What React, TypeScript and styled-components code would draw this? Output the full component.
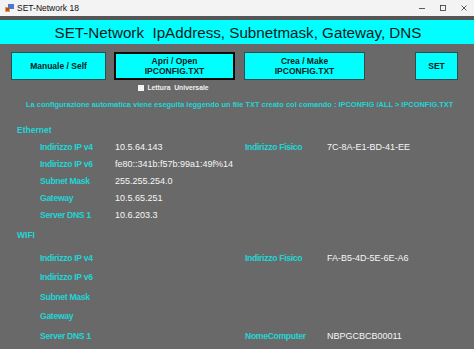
import React from 'react';
import styled, {createGlobalStyle} from 'styled-components';

const Global = createGlobalStyle`
  html, body {
    margin: 0;
    padding: 0;
    background: #696969;
  }
  * { box-sizing: border-box; }
`;

const Window = styled.div`
  width: 474px;
  height: 349px;
  background: #696969;
  display: flex;
  flex-direction: column;
  overflow: hidden;
  font-family: "Liberation Sans", Arial, sans-serif;
`;

const TitleBar = styled.div`
  height: 16px;
  background: #f3f3f3;
  display: flex;
  align-items: center;
  padding-left: 5px;
  font-size: 8.5px;
  color: #111;
`;

const AppTitle = styled.span`
  margin-left: 3px;
  flex: 1;
`;

const Controls = styled.div`
  display: flex;
  align-items: center;
  height: 100%;
`;

const Ctrl = styled.div`
  width: 21px;
  height: 100%;
  display: flex;
  align-items: center;
  justify-content: center;
`;

const Strip = styled.div`
  height: 4px;
  background: #555555;
`;

const Banner = styled.div`
  height: 24px;
  background: #00ffff;
  display: flex;
  align-items: center;
  justify-content: center;
  font-size: 15.2px;
  color: #0a1a1a;
  white-space: pre;
  padding-left: 2px;
`;

const ButtonRow = styled.div`
  display: flex;
  align-items: flex-start;
  padding: 8px 0 0 11px;
  height: 60px;
`;

const Btn = styled.div<{$w: number; $ml: number; $focus?: boolean}>`
  width: ${p => p.$w}px;
  height: 28px;
  margin-left: ${p => p.$ml}px;
  background: #00ffff;
  border: ${p => (p.$focus ? '2px solid #0b0b0b' : '1px solid #2f4f4f')};
  display: flex;
  align-items: center;
  justify-content: center;
  text-align: center;
  font-weight: bold;
  font-size: 8.5px;
  line-height: 10px;
  color: #102020;
`;

const OpenCol = styled.div`
  display: flex;
  flex-direction: column;
  align-items: center;
`;

const Check = styled.label`
  display: flex;
  align-items: center;
  margin-top: 4px;
  margin-left: 6px;
  font-size: 6.8px;
  font-weight: bold;
  color: #f0f0f0;
  white-space: pre;
`;

const Box = styled.span`
  width: 6px;
  height: 6px;
  background: #f4f4f4;
  margin-right: 3px;
`;

const Info = styled.div`
  padding-left: 26px;
  margin-top: -4px;
  font-size: 7.45px;
  font-weight: bold;
  color: #1fd6d6;
  white-space: nowrap;
`;

const Section = styled.div<{$mt: number}>`
  margin-top: ${p => p.$mt}px;
`;

const SectionTitle = styled.div`
  padding-left: 17px;
  font-size: 8.5px;
  font-weight: bold;
  color: #1fd6d6;
  height: 12px;
  line-height: 12px;
`;

const Grid = styled.div<{$row: number; $mt: number}>`
  display: grid;
  grid-template-columns: 75px 130px 82px 1fr;
  grid-auto-rows: ${p => p.$row}px;
  align-items: center;
  padding-left: 40px;
  margin-top: ${p => p.$mt}px;
`;

const Label = styled.div`
  font-size: 8.6px;
  font-weight: bold;
  letter-spacing: -0.3px;
  color: #1fd6d6;
  white-space: nowrap;
`;

const Value = styled.div`
  font-size: 9px;
  color: #f6f6f6;
  white-space: nowrap;
`;

type Row = [string, string, string?, string?];

const ethernet: Row[] = [
  ['Indirizzo IP v4', '10.5.64.143', 'Indirizzo Fisico', '7C-8A-E1-BD-41-EE'],
  ['Indirizzo IP v6', 'fe80::341b:f57b:99a1:49f%14'],
  ['Subnet Mask', '255.255.254.0'],
  ['Gateway', '10.5.65.251'],
  ['Server DNS 1', '10.6.203.3'],
];

const wifi: Row[] = [
  ['Indirizzo IP v4', '', 'Indirizzo Fisico', 'FA-B5-4D-5E-6E-A6'],
  ['Indirizzo IP v6', ''],
  ['Subnet Mask', ''],
  ['Gateway', ''],
  ['Server DNS 1', '', 'NomeComputer', 'NBPGCBCB00011'],
];

const Rows = ({rows}: {rows: Row[]}) => (
  <>
    {rows.map((r, i) => (
      <React.Fragment key={i}>
        <Label>{r[0]}</Label>
        <Value>{r[1]}</Value>
        <Label>{r[2] || ''}</Label>
        <Value>{r[3] || ''}</Value>
      </React.Fragment>
    ))}
  </>
);

const AppIcon = () => (
  <svg width="9" height="9" viewBox="0 0 9 9">
    <rect x="0" y="3" width="5" height="5" fill="#d9a441"/>
    <rect x="3" y="0" width="6" height="5" fill="#4f77c9"/>
    <rect x="1" y="4" width="3" height="3" fill="#c2452f"/>
  </svg>
);

export default function App() {
  return (
    <Window>
      <Global/>
      <TitleBar>
        <AppIcon/>
        <AppTitle>SET-Network  18</AppTitle>
        <Controls>
          <Ctrl>
            <svg width="8" height="8" viewBox="0 0 8 8"><line x1="1" y1="4.5" x2="7" y2="4.5" stroke="#333" strokeWidth="0.8"/></svg>
          </Ctrl>
          <Ctrl>
            <svg width="8" height="8" viewBox="0 0 8 8"><rect x="1.5" y="1.5" width="5" height="5" fill="none" stroke="#333" strokeWidth="0.8"/></svg>
          </Ctrl>
          <Ctrl>
            <svg width="8" height="8" viewBox="0 0 8 8"><path d="M1.5 1.5 L6.5 6.5 M6.5 1.5 L1.5 6.5" stroke="#333" strokeWidth="0.8"/></svg>
          </Ctrl>
        </Controls>
      </TitleBar>
      <Strip/>
      <Banner>SET-Network  IpAddress, Subnetmask, Gateway, DNS</Banner>
      <ButtonRow>
        <Btn $w={95} $ml={0}>Manuale / Self</Btn>
        <OpenCol>
          <Btn $w={121} $ml={8} $focus>Apri / Open<br/>IPCONFIG.TXT</Btn>
          <Check><Box/>Lettura  Universale</Check>
        </OpenCol>
        <Btn $w={121} $ml={9}>Crea / Make<br/>IPCONFIG.TXT</Btn>
        <Btn $w={43} $ml={50}>SET</Btn>
      </ButtonRow>
      <Info>La configurazione automatica viene eseguita leggendo un file TXT creato col comando : IPCONFIG /ALL &gt; IPCONFIG.TXT</Info>
      <Section $mt={15}>
        <SectionTitle>Ethernet</SectionTitle>
        <Grid $row={16.8} $mt={3}>
          <Rows rows={ethernet}/>
        </Grid>
      </Section>
      <Section $mt={6}>
        <SectionTitle>WIFI</SectionTitle>
        <Grid $row={19.5} $mt={7}>
          <Rows rows={wifi}/>
        </Grid>
      </Section>
    </Window>
  );
}
